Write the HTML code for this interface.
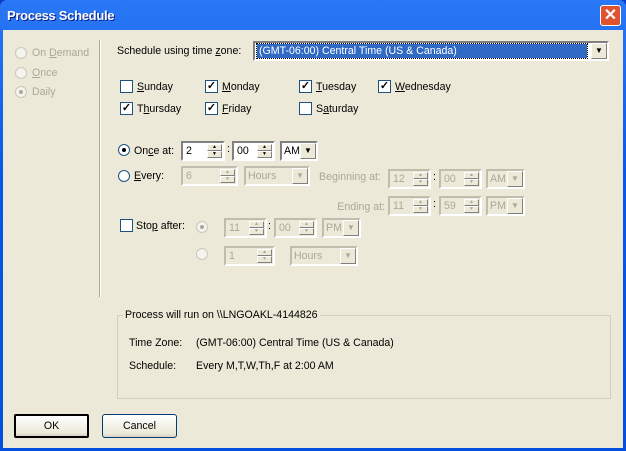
<!DOCTYPE html>
<html><head><meta charset="utf-8"><style>
*{box-sizing:border-box;margin:0;padding:0}
body{width:626px;height:451px;overflow:hidden;background:#0a3bd0;font-family:"Liberation Sans",sans-serif;font-size:10.6px;color:#000;position:relative}
.win{position:absolute;left:0;top:0;width:626px;height:451px;background:linear-gradient(#2a78f5,#0558e8 40%,#0350de);border-radius:7px 7px 0 0}
.title{position:absolute;left:7px;top:8px;color:#fff;font-weight:bold;font-size:13px;letter-spacing:-0.3px;text-shadow:1px 1px #0a1e80}
.close{position:absolute;left:600px;top:5px;width:21px;height:21px;background:#e0532f;border:1px solid #fff;border-radius:3px;color:#fff;font-weight:bold;font-size:16px;line-height:19px;text-align:center}
.body{position:absolute;left:3px;top:30px;width:620px;height:418px;background:#ece9d8}
.a{position:absolute;white-space:nowrap}
.g{color:#aca899}
.u{text-decoration:underline}
.cb{position:absolute;width:13px;height:13px;border:1px solid #1c5180;background:#fff;font-size:11px;line-height:11px;text-align:center;font-weight:bold}
.rd{position:absolute;width:12px;height:12px;border:1px solid #1c5180;border-radius:50%;background:#fff}
.rd.dis{border-color:#cac8bb;background:#f4f3ee}
.rd.on::after{content:"";position:absolute;left:3px;top:3px;width:4px;height:4px;border-radius:50%;background:#000}
.rd.dis.on::after{background:#aca899}
.ed{position:absolute;height:20px;border:2px solid;border-color:#808080 #fff #fff #808080;background:#fff;padding:1px 3px;line-height:14px}
.ed.dis{background:#ece9d8;color:#aca899;border-color:#c0bdad #fff #fff #c0bdad}
.sp{position:absolute;right:1px;top:1px;width:15px;height:14px}
.sp i{display:block;height:7px;border:1px solid;border-color:#fff #808080 #808080 #fff;background:#ece9d8;font-size:5px;line-height:5px;text-align:center;font-style:normal}
.cm{position:absolute;height:20px;border:2px solid;border-color:#808080 #fff #fff #808080;background:#fff;padding:1px 2px;line-height:14px}
.cm.dis{background:#ece9d8;color:#aca899;border-color:#c0bdad #fff #fff #c0bdad}
.cm b{position:absolute;right:0;top:0;width:16px;height:16px;border:1px solid;border-color:#fff #808080 #808080 #fff;background:#ece9d8;font-size:8px;line-height:14px;text-align:center;font-weight:normal}
.cm.dis b{color:#aca899}
.btn{position:absolute;height:24px;border:1px solid #003c74;border-radius:3px;background:linear-gradient(#fff,#ece9d8 85%,#d6d0c5);text-align:center;line-height:22px}
</style></head><body>
<div class="win"></div>
<div class="title">Process Schedule</div>
<div class="close">✕</div>
<div class="body"></div>

<div class="rd dis" style="left:15px;top:47px"></div><div class="a g" style="left:32px;top:47px">On <span class="u">D</span>emand</div>
<div class="rd dis" style="left:15px;top:67px"></div><div class="a g" style="left:32px;top:67px"><span class="u">O</span>nce</div>
<div class="rd dis on" style="left:15px;top:86px"></div><div class="a g" style="left:32px;top:86px">Daily</div>
<div class="a" style="left:99px;top:40px;width:2px;height:257px;border-left:1px solid #aca899;border-right:1px solid #fff"></div>

<div class="a" style="left:117px;top:45px">Schedule using time <span class="u">z</span>one:</div>
<div class="cm" style="left:253px;top:41px;width:356px;height:20px"><span style="background:#316ac5;color:#fff;display:block;width:330px;outline:1px dotted #000;padding-left:2px">(GMT-06:00) Central Time (US &amp; Canada)</span><b style="color:#000">▼</b></div>

<div class="cb" style="left:120px;top:80px"></div><div class="a" style="left:137px;top:81px"><span class="u">S</span>unday</div>
<div class="cb" style="left:205px;top:80px">✓</div><div class="a" style="left:222px;top:81px"><span class="u">M</span>onday</div>
<div class="cb" style="left:299px;top:80px">✓</div><div class="a" style="left:316px;top:81px"><span class="u">T</span>uesday</div>
<div class="cb" style="left:378px;top:80px">✓</div><div class="a" style="left:395px;top:81px"><span class="u">W</span>ednesday</div>
<div class="cb" style="left:120px;top:102px">✓</div><div class="a" style="left:137px;top:103px">T<span class="u">h</span>ursday</div>
<div class="cb" style="left:205px;top:102px">✓</div><div class="a" style="left:222px;top:103px"><span class="u">F</span>riday</div>
<div class="cb" style="left:299px;top:102px"></div><div class="a" style="left:316px;top:103px">S<span class="u">a</span>turday</div>

<div class="rd on" style="left:118px;top:144px"></div><div class="a" style="left:134px;top:145px">On<span class="u">c</span>e at:</div>
<div class="ed" style="left:181px;top:141px;width:44px">2<div class="sp"><i>▲</i><i>▼</i></div></div>
<div class="a" style="left:227px;top:143px">:</div>
<div class="ed" style="left:232px;top:141px;width:43px">00<div class="sp"><i>▲</i><i>▼</i></div></div>
<div class="cm" style="left:280px;top:141px;width:38px">AM<b style="color:#000">▼</b></div>

<div class="rd" style="left:118px;top:170px"></div><div class="a" style="left:134px;top:170px"><span class="u">E</span>very:</div>
<div class="ed dis" style="left:181px;top:166px;width:57px">6<div class="sp"><i>▲</i><i>▼</i></div></div>
<div class="cm dis" style="left:244px;top:166px;width:66px">Hours<b>▼</b></div>
<div class="a g" style="left:319px;top:171px">Beginning at:</div>
<div class="ed dis" style="left:388px;top:169px;width:43px">12<div class="sp"><i>▲</i><i>▼</i></div></div>
<div class="a" style="left:433px;top:171px">:</div>
<div class="ed dis" style="left:439px;top:169px;width:43px">00<div class="sp"><i>▲</i><i>▼</i></div></div>
<div class="cm dis" style="left:486px;top:169px;width:39px">AM<b>▼</b></div>
<div class="a g" style="right:241px;top:201px">Ending at:</div>
<div class="ed dis" style="left:388px;top:196px;width:43px">11<div class="sp"><i>▲</i><i>▼</i></div></div>
<div class="a" style="left:433px;top:198px">:</div>
<div class="ed dis" style="left:439px;top:196px;width:43px">59<div class="sp"><i>▲</i><i>▼</i></div></div>
<div class="cm dis" style="left:486px;top:196px;width:39px">PM<b>▼</b></div>

<div class="cb" style="left:120px;top:219px"></div><div class="a" style="left:136px;top:220px">Sto<span class="u">p</span> after:</div>
<div class="rd dis on" style="left:196px;top:221px"></div>
<div class="ed dis" style="left:224px;top:218px;width:43px">11<div class="sp"><i>▲</i><i>▼</i></div></div>
<div class="a" style="left:268px;top:220px">:</div>
<div class="ed dis" style="left:274px;top:218px;width:43px">00<div class="sp"><i>▲</i><i>▼</i></div></div>
<div class="cm dis" style="left:322px;top:218px;width:39px">PM<b>▼</b></div>
<div class="rd dis" style="left:196px;top:248px"></div>
<div class="ed dis" style="left:224px;top:246px;width:51px">1<div class="sp"><i>▲</i><i>▼</i></div></div>
<div class="cm dis" style="left:290px;top:246px;width:68px">Hours<b>▼</b></div>

<div class="a" style="left:117px;top:315px;width:494px;height:84px;border:1px solid #d0d0bf"></div>
<div class="a" style="left:123px;top:309px;background:#ece9d8;padding:0 2px">Process will run on \\LNGOAKL-4144826</div>
<div class="a" style="left:129px;top:337px">Time Zone:</div><div class="a" style="left:196px;top:337px">(GMT-06:00) Central Time (US &amp; Canada)</div>
<div class="a" style="left:129px;top:360px">Schedule:</div><div class="a" style="left:196px;top:360px">Every M,T,W,Th,F at 2:00 AM</div>

<div class="btn" style="left:14px;top:414px;width:75px;border:2px solid #000;border-radius:2px;line-height:20px">OK</div>
<div class="btn" style="left:102px;top:414px;width:75px">Cancel</div>
</body></html>
